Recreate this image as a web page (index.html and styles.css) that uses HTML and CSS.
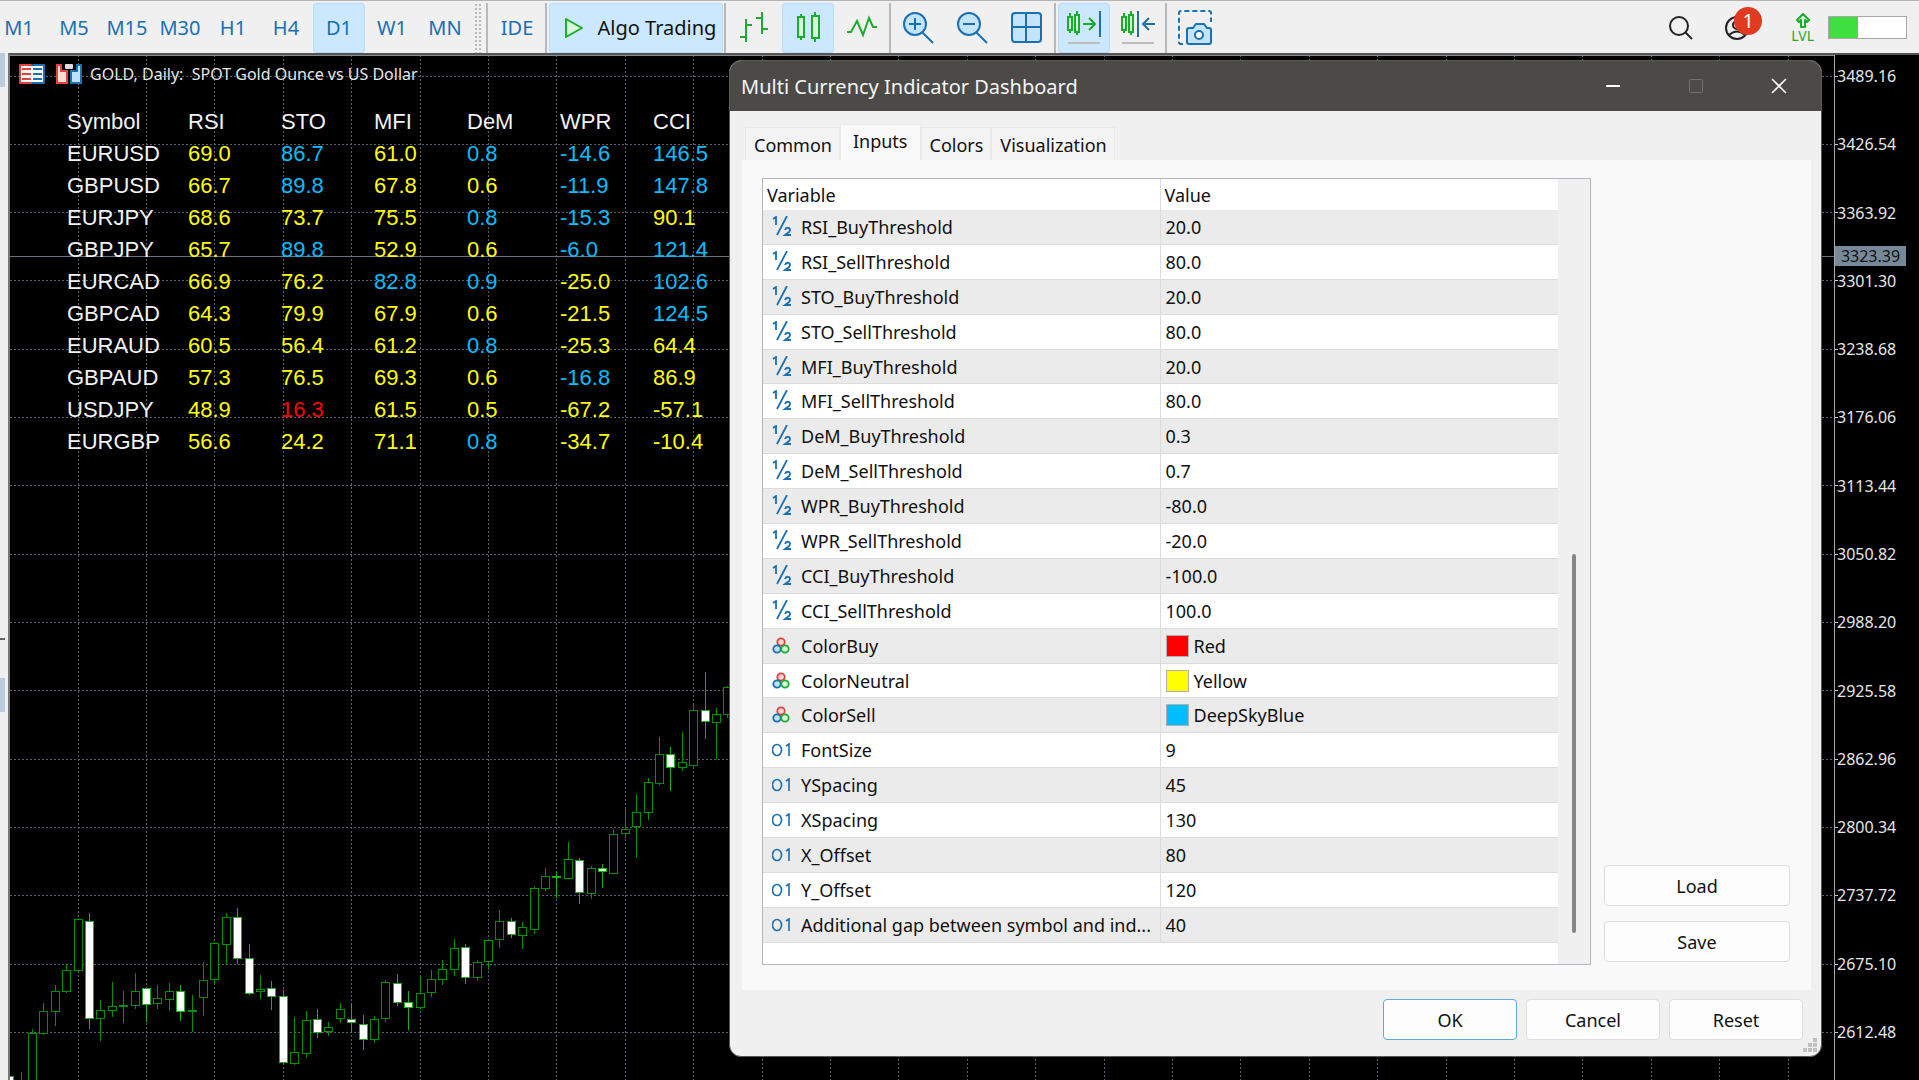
FILE: index.html
```
<!DOCTYPE html>
<html lang="en">
<head>
    <meta charset="utf-8">
    <meta name="viewport" content="width=device-width, initial-scale=1">
    <title>GOLD, Daily</title>
    <link rel="stylesheet" href="styles.css">
</head>
<body>
    <header class="toolbar">
        <button class="frame">M1</button>
        <button class="frame">M5</button>
        <button class="frame">M15</button>
        <button class="frame">M30</button>
        <button class="frame">H1</button>
        <button class="frame">H4</button>
        <button class="frame active">D1</button>
        <button class="frame">W1</button>
        <button class="frame">MN</button>
        <span class="grip"></span>
        <span class="sep"></span>
        <button class="ide">IDE</button>
        <span class="sep"></span>
        <button class="algo active">
            <svg width="20" height="22" viewBox="0 0 20 22"><path d="M2 2L18 11L2 20Z" fill="#d8f8dc" stroke="#1cab2c" stroke-width="2" stroke-linejoin="round"/></svg>
            Algo Trading
        </button>
        <span class="sep"></span>
        <button class="tool" aria-label="Bar chart">
            <svg width="32" height="32" viewBox="0 0 32 32"><path d="M8 7V30M2 25H8M8 13H14M24 0V22M18 6H24M24 17H30" fill="none" stroke="#1cab2c" stroke-width="2"/></svg>
        </button>
        <button class="tool active" aria-label="Candlesticks">
            <svg width="32" height="32" viewBox="0 0 32 32"><path d="M9 2V28M23 0V30" stroke="#1cab2c" stroke-width="2"/><path d="M6 5H12V25H6ZM20 4H27V26H20Z" fill="#d8f8dc" stroke="#1cab2c" stroke-width="2"/></svg>
        </button>
        <button class="tool" aria-label="Line chart">
            <svg width="32" height="32" viewBox="0 0 32 32"><path d="M1 20H5L11 9L17 23L23 6L27 15H31" fill="none" stroke="#1cab2c" stroke-width="2"/></svg>
        </button>
        <span class="sep"></span>
        <button class="tool" aria-label="Zoom in">
            <svg width="32" height="32" viewBox="0 0 32 32"><path d="M19 20L30 31" stroke="#1b6fb3" stroke-width="2"/><circle cx="12" cy="12" r="11" fill="#c3e4fd" stroke="#1b6fb3" stroke-width="2"/><path d="M6 12H18M12 6V18" stroke="#1b6fb3" stroke-width="2"/></svg>
        </button>
        <button class="tool" aria-label="Zoom out">
            <svg width="32" height="32" viewBox="0 0 32 32"><path d="M19 20L30 31" stroke="#1b6fb3" stroke-width="2"/><circle cx="12" cy="12" r="11" fill="#c3e4fd" stroke="#1b6fb3" stroke-width="2"/><path d="M6 12H18" stroke="#1b6fb3" stroke-width="2"/></svg>
        </button>
        <button class="tool" aria-label="Tile windows">
            <svg width="32" height="32" viewBox="0 0 32 32"><rect x="1" y="1" width="29" height="29" rx="3" fill="#c3e4fd" stroke="#1b6fb3" stroke-width="2"/><path d="M1 15H30M15 1V30" stroke="#1b6fb3" stroke-width="2"/></svg>
        </button>
        <span class="sep"></span>
        <button class="tool active" aria-label="Scroll to end">
            <svg width="36" height="34" viewBox="0 0 36 34"><path d="M4 2V22M11 0V24" stroke="#1cab2c" stroke-width="2"/><path d="M2 6H6V19H2ZM9 4H13V21H9Z" fill="#d8f8dc" stroke="#1cab2c" stroke-width="2"/><path d="M17 13H29M23 7L29 13L23 19" fill="none" stroke="#1cab2c" stroke-width="2"/><path d="M34 0V26" stroke="#1b6fb3" stroke-width="2"/><path d="M2 32H34" stroke="#bdbdbd" stroke-width="2"/></svg>
        </button>
        <button class="tool" aria-label="Chart shift">
            <svg width="36" height="34" viewBox="0 0 36 34"><path d="M4 2V22M11 0V24" stroke="#1cab2c" stroke-width="2"/><path d="M2 6H6V19H2ZM9 4H13V21H9Z" fill="#d8f8dc" stroke="#1cab2c" stroke-width="2"/><path d="M35 13H23M29 7L23 13L29 19M18 0V26" fill="none" stroke="#1b6fb3" stroke-width="2"/><path d="M2 32H34" stroke="#bdbdbd" stroke-width="2"/></svg>
        </button>
        <span class="sep"></span>
        <button class="tool" aria-label="Screenshot">
            <svg width="36" height="36" viewBox="0 0 36 36"><path d="M6 34H4Q2 34 2 32V3Q2 1 4 1H32Q34 1 34 3V12" fill="none" stroke="#1b6fb3" stroke-width="2" stroke-dasharray="5 3"/><path d="M12 18H16L19 14H27L30 18H32Q34 18 34 20V32Q34 34 32 34H12Q10 34 10 32V20Q10 18 12 18Z" fill="#c3e4fd" stroke="#1b6fb3" stroke-width="2"/><circle cx="22" cy="25" r="4" fill="#fff" stroke="#1b6fb3" stroke-width="2"/></svg>
        </button>
        <div class="status">
            <button class="plain" aria-label="Search">
                <svg width="24" height="24" viewBox="0 0 24 24"><circle cx="10" cy="10" r="9" fill="none" stroke="#222" stroke-width="2"/><path d="M16 16L23 23" stroke="#222" stroke-width="2"/></svg>
            </button>
            <button class="plain account" aria-label="Account">
                <svg width="24" height="24" viewBox="0 0 24 24"><g fill="none" stroke="#222" stroke-width="2"><circle cx="12" cy="12" r="11"/><circle cx="12" cy="9" r="4"/><path d="M4 19Q12 12 20 19"/></g></svg>
                <span class="badge">1</span>
            </button>
            <div class="level">
                <svg width="14" height="16" viewBox="0 0 14 16"><path d="M7 1L13 7L11 9L9 7V14H5V7L3 9L1 7Z" fill="#d8f8dc" stroke="#1cab2c" stroke-width="2" stroke-linejoin="round"/></svg>
                <span>LVL</span>
            </div>
            <div class="battery"><span class="charge"></span></div>
        </div>
    </header>

    <main class="workspace">
        <aside class="edge">
            <span class="tab-top"></span>
            <span class="mark"></span>
            <span class="tab-low"></span>
        </aside>
        <section class="chart">
            <svg class="plot" id="plot"></svg>
            <div class="overlay">
                <h1 class="chart-title">
                    <svg width="26" height="20" viewBox="0 0 26 20"><rect width="13" height="20" rx="1" fill="#e0433c"/><rect x="13" width="13" height="20" rx="1" fill="#1b6fb3"/><path d="M2 2H24V18H2Z" fill="#fff"/><path d="M3 5H12M3 10H12M3 15H12" stroke="#e0433c" stroke-width="2"/><path d="M14 5H23M14 10H23M14 15H23" stroke="#1b6fb3" stroke-width="2"/></svg>
                    <svg width="26" height="20" viewBox="0 0 26 20"><path d="M1 1H5V7H11V19H1Z" fill="#fcd9d5" stroke="#e0433c" stroke-width="2"/><path d="M25 1H21V7H15V19H25Z" fill="#bfe2fc" stroke="#1b6fb3" stroke-width="2"/><rect x="9" y="0" width="8" height="5" rx="1" fill="#ddd"/></svg>
                    <span>GOLD, Daily:&nbsp; SPOT Gold Ounce vs US Dollar</span>
                </h1>
                <table class="signals">
                    <thead>
                        <tr><th>Symbol</th><th>RSI</th><th>STO</th><th>MFI</th><th>DeM</th><th>WPR</th><th>CCI</th></tr>
                    </thead>
                    <tbody>
                        <tr><th>EURUSD</th><td>69.0</td><td class="sell">86.7</td><td>61.0</td><td class="sell">0.8</td><td class="sell">-14.6</td><td class="sell">146.5</td></tr>
                        <tr><th>GBPUSD</th><td>66.7</td><td class="sell">89.8</td><td>67.8</td><td>0.6</td><td class="sell">-11.9</td><td class="sell">147.8</td></tr>
                        <tr><th>EURJPY</th><td>68.6</td><td>73.7</td><td>75.5</td><td class="sell">0.8</td><td class="sell">-15.3</td><td>90.1</td></tr>
                        <tr><th>GBPJPY</th><td>65.7</td><td class="sell">89.8</td><td>52.9</td><td>0.6</td><td class="sell">-6.0</td><td class="sell">121.4</td></tr>
                        <tr><th>EURCAD</th><td>66.9</td><td>76.2</td><td class="sell">82.8</td><td class="sell">0.9</td><td>-25.0</td><td class="sell">102.6</td></tr>
                        <tr><th>GBPCAD</th><td>64.3</td><td>79.9</td><td>67.9</td><td>0.6</td><td>-21.5</td><td class="sell">124.5</td></tr>
                        <tr><th>EURAUD</th><td>60.5</td><td>56.4</td><td>61.2</td><td class="sell">0.8</td><td>-25.3</td><td>64.4</td></tr>
                        <tr><th>GBPAUD</th><td>57.3</td><td>76.5</td><td>69.3</td><td>0.6</td><td class="sell">-16.8</td><td>86.9</td></tr>
                        <tr><th>USDJPY</th><td>48.9</td><td class="buy">16.3</td><td>61.5</td><td>0.5</td><td>-67.2</td><td>-57.1</td></tr>
                        <tr><th>EURGBP</th><td>56.6</td><td>24.2</td><td>71.1</td><td class="sell">0.8</td><td>-34.7</td><td>-10.4</td></tr>
                    </tbody>
                </table>
            </div>
            <div class="axis">
                <span>3489.16</span><span>3426.54</span><span>3363.92</span><span>3301.30</span><span>3238.68</span>
                <span>3176.06</span><span>3113.44</span><span>3050.82</span><span>2988.20</span><span>2925.58</span>
                <span>2862.96</span><span>2800.34</span><span>2737.72</span><span>2675.10</span><span>2612.48</span>
                <span class="price-tag">3323.39</span>
            </div>
        </section>
    </main>

    <div class="dialog" role="dialog" aria-labelledby="dialog-title">
        <div class="titlebar">
            <h2 id="dialog-title">Multi Currency Indicator Dashboard</h2>
            <button class="win" aria-label="Minimize"><svg width="16" height="16" viewBox="0 0 16 16"><path d="M1 8H15" stroke="#fff" stroke-width="2"/></svg></button>
            <button class="win" aria-label="Maximize" disabled><svg width="16" height="16" viewBox="0 0 16 16"><rect x="1.5" y="1.5" width="13" height="13" rx="1" fill="none" stroke="#72716f"/></svg></button>
            <button class="win" aria-label="Close"><svg width="16" height="16" viewBox="0 0 16 16"><path d="M1 1L15 15M15 1L1 15" stroke="#fff" stroke-width="1.6"/></svg></button>
        </div>
        <div class="tabs" role="tablist">
            <button class="tab" role="tab">Common</button>
            <button class="tab current" role="tab" aria-selected="true">Inputs</button>
            <button class="tab" role="tab">Colors</button>
            <button class="tab" role="tab">Visualization</button>
        </div>
        <div class="pane">
            <div class="listbox">
                <table class="inputs">
                    <thead>
                        <tr><th>Variable</th><th>Value</th></tr>
                    </thead>
                    <tbody id="inputs"></tbody>
                </table>
                <div class="track"><span class="thumb"></span></div>
            </div>
            <div class="side">
                <button class="btn">Load</button>
                <button class="btn">Save</button>
            </div>
        </div>
        <div class="footer">
            <button class="btn default">OK</button>
            <button class="btn">Cancel</button>
            <button class="btn">Reset</button>
        </div>
        <svg class="resize" width="15" height="15" viewBox="0 0 15 15"><path d="M10 0H14V4H10ZM5 5H9V9H5ZM10 5H14V9H10ZM0 10H4V14H0ZM5 10H9V14H5ZM10 10H14V14H10Z" fill="#c0c0c0"/></svg>
    </div>

    <script src="chart.js"></script>
</body>
</html>
```
FILE: styles.css
```
* {
    box-sizing: border-box;
    margin: 0;
}
body {
    height: 100vh;
    display: flex;
    flex-direction: column;
    overflow: hidden;
    background: #f0f0f0;
    font-family: "Noto Sans", "Open Sans", sans-serif;
    color: #111;
}
button {
    font: inherit;
    color: inherit;
    background: none;
    border: none;
    padding: 0;
}
svg {
    display: block;
    flex: none;
}

/* toolbar */
.toolbar {
    height: 53px;
    flex: none;
    display: flex;
    align-items: center;
    padding: 2px 12px 1px 0;
    border-top: 1px solid #b4b4b4;
    background: #f0f0f0;
    font-size: 20px;
}
.toolbar > button {
    height: 50px;
    display: flex;
    align-items: center;
    justify-content: center;
    border-radius: 3px;
}
.frame {
    width: 52px;
    margin-right: 1px;
    color: #1b6fb3;
}
.frame:first-child {
    width: 38px;
    margin-right: 10px;
}
.toolbar > .active {
    background: #cce8ff;
    border: 1px solid #b5dcfb;
}
.grip {
    width: 8px;
    height: 50px;
    margin: 0 4px 0 2px;
    background-image: radial-gradient(#bbb 1px, transparent 1px);
    background-size: 4px 4px;
}
.sep {
    width: 2px;
    height: 50px;
    margin-right: 1px;
    background: #b8b8b8;
}
.ide {
    width: 56px;
    color: #1b6fb3;
}
.algo {
    width: 174px;
    margin: 0 1px;
    padding-left: 8px;
    gap: 14px;
}
.tool {
    width: 52px;
    margin: 0 1px;
}
.status {
    margin-left: auto;
    display: flex;
    align-items: center;
    gap: 32px;
}
.plain {
    position: relative;
}
.badge {
    position: absolute;
    left: 9px;
    top: -9px;
    width: 28px;
    height: 28px;
    border-radius: 50%;
    background: #e03a20;
    color: #fff;
    line-height: 28px;
}
.level {
    display: flex;
    flex-direction: column;
    align-items: center;
    margin-left: 10px;
    color: #1cab2c;
    font-size: 14px;
    line-height: 14px;
}
.battery {
    width: 79px;
    height: 23px;
    margin-left: -18px;
    border: 1px solid #a8a8a8;
    background: #fff;
}
.charge {
    display: block;
    width: 38%;
    height: 100%;
    background: #40df40;
}

/* chart */
.workspace {
    flex: 1;
    min-height: 0;
    display: flex;
}
.edge {
    position: relative;
    width: 8px;
    background: #f0f0f0;
}
.tab-top, .tab-low, .mark {
    position: absolute;
    left: 0;
    width: 5px;
    height: 34px;
    background: #bccbdb;
}
.tab-top {
    top: 0;
}
.tab-low {
    top: 625px;
}
.mark {
    top: 585px;
    height: 2px;
    background: #666;
}
.chart {
    flex: 1;
    min-width: 0;
    display: grid;
    grid-template-columns: 1fr 84px;
    border-top: 2px solid #555;
    border-left: 2px solid #777;
    background: #000;
    color: #e6e6e6;
}
.plot {
    grid-area: 1 / 1 / 2 / 3;
    width: 100%;
    height: 100%;
}
.overlay {
    grid-area: 1 / 1;
    padding: 8px 0 0 9px;
}
.chart-title {
    display: flex;
    align-items: center;
    gap: 11px;
    height: 22px;
    font-size: 16px;
    font-weight: normal;
}
.chart-title span {
    margin-left: -3px;
}
.signals {
    margin: 21px 0 0 48px;
    border-collapse: collapse;
    table-layout: fixed;
    width: 679px;
    font: 22px "Liberation Sans", Arial, sans-serif;
}
.signals th, .signals td {
    width: 93px;
    height: 32px;
    padding: 0;
    line-height: 32px;
    text-align: left;
    font-weight: normal;
    color: #ffff00;
}
.signals th {
    color: #f2f2f2;
}
.signals th:first-child {
    width: 121px;
}
.signals .sell {
    color: #00bfff;
}
.signals .buy {
    color: #ff0000;
}
.axis {
    grid-area: 1 / 2;
    position: relative;
    display: flex;
    flex-direction: column;
    justify-content: space-between;
    padding: 10px 0 37px 2px;
    font-size: 16px;
    line-height: 22px;
}
.price-tag {
    position: absolute;
    left: 0;
    top: 191px;
    width: 71px;
    line-height: 20px;
    text-align: center;
    background: #778899;
    color: #111;
}

/* dialog */
.dialog {
    position: absolute;
    left: 729px;
    top: 60px;
    width: 1093px;
    display: flex;
    flex-direction: column;
    border: 1px solid #5a5957;
    border-radius: 12px;
    overflow: hidden;
    background: #f0f0f0;
    font-size: 18px;
}
.titlebar {
    height: 50px;
    display: flex;
    align-items: center;
    gap: 67px;
    padding: 0 34px 0 11px;
    background: #4b4a47;
    color: #f4f4f4;
}
.titlebar h2 {
    flex: 1;
    font-size: 20px;
    font-weight: normal;
}
.tabs {
    display: flex;
    align-items: flex-end;
    padding: 13px 15px 0;
}
.tab {
    height: 33px;
    padding: 2px 7px 0 8px;
    border: 1px solid #e9e9e9;
    border-bottom: none;
    background: #f3f3f3;
}
.tab.current {
    height: 36px;
    padding: 0 12px 4px;
    background: #f9f9f9;
}
.pane {
    display: flex;
    gap: 13px;
    margin: 0 10px 0 12px;
    padding: 18px 21px 25px 20px;
    background: #f9f9f9;
}
.listbox {
    flex: 1;
    display: flex;
    padding-bottom: 21px;
    border: 1px solid #b4b6be;
    background: #fff;
}
.inputs {
    flex: 1;
    width: 100%;
    height: 764px;
    table-layout: fixed;
    border-collapse: separate;
    border-spacing: 0;
}
.inputs th, .inputs td {
    width: 50%;
    padding: 0 4px;
    text-align: left;
    font-weight: normal;
    white-space: nowrap;
}
.inputs th {
    height: 31px;
}
.inputs tbody tr:nth-child(odd) {
    background: #ebebeb;
}
.inputs td {
    border-bottom: 1px solid #dcdcdc;
}
.inputs th:first-child, .inputs td:first-child {
    border-right: 1px solid #dcdcdc;
}
.cell {
    display: flex;
    align-items: center;
    gap: 9px;
    padding-left: 5px;
    line-height: 24px;
}
.icon {
    flex: none;
    width: 20px;
}
.value {
    display: flex;
    align-items: center;
    gap: 5px;
    padding-left: 1px;
    line-height: 24px;
}
.swatch {
    width: 23px;
    height: 22px;
    border: 1px solid #b0b0b0;
}
.track {
    position: relative;
    flex: none;
    width: 32px;
    margin-bottom: -21px;
    background: #f0f0f0;
}
.thumb {
    position: absolute;
    left: 14px;
    top: 375px;
    bottom: 31px;
    width: 4px;
    border-radius: 2px;
    background: #868686;
}
.side {
    width: 186px;
    display: flex;
    flex-direction: column;
    justify-content: flex-end;
    gap: 15px;
    padding-bottom: 3px;
}
.btn {
    height: 41px;
    border: 1px solid #dedede;
    border-radius: 4px;
    background: #fdfdfd;
}
.footer {
    display: flex;
    justify-content: flex-end;
    gap: 9px;
    padding: 9px 18px 16px;
}
.footer .btn {
    width: 134px;
}
.btn.default {
    border-color: #5ea9e0;
}
.resize {
    position: absolute;
    right: 3px;
    bottom: 3px;
}
```
FILE: chart.js
```
const NS = 'http://www.w3.org/2000/svg'
const plot = document.getElementById('plot')

// the plot starts below the toolbar and right of the edge strip
const LEFT = 10
const TOP = 55
const AXIS = 1834

function draw(name, attrs) {
    const el = document.createElementNS(NS, name)
    for (const key in attrs) el.setAttribute(key, attrs[key])
    plot.appendChild(el)
}

function line(x1, y1, x2, y2, stroke, dash) {
    draw('line', {
        x1: x1 - LEFT, y1: y1 - TOP, x2: x2 - LEFT, y2: y2 - TOP,
        stroke: stroke, 'stroke-width': 1, 'stroke-dasharray': dash || 'none'
    })
}

// grid
for (let i = 0; i < 26; i++) {
    const x = Math.round(77.5 + i * 68.4) + 0.5
    line(x, 55, x, 1080, '#55616d', '2 2')
}
for (let i = 0; i < 15; i++) {
    const y = Math.round(75.5 + i * 68.33) + 0.5
    line(10, y, AXIS, y, '#55616d', '2 2')
    line(AXIS, y, AXIS + 4, y, '#c8c8c8')
}
line(10, 55.5, AXIS, 55.5, '#8a8a8a')
line(AXIS + 0.5, 55, AXIS + 0.5, 1080, '#a8a8a8')

// high, body top, body bottom, low, 1 = falling
const candles = [
    [1076, 1076, 1095, 1095, 1], [1072, 1086, 1095, 1095, 0], [1029, 1033, 1095, 1095, 0],
    [1003, 1011, 1033, 1035, 0], [985, 991, 1011, 1026, 0], [965, 970, 991, 993, 0],
    [918, 919, 970, 972, 0], [913, 921, 1018, 1029, 1], [1000, 1010, 1018, 1041, 0],
    [982, 1006, 1010, 1017, 0], [991, 1005, 1006, 1023, 0], [973, 991, 1005, 1009, 0],
    [988, 988, 1004, 1022, 1], [985, 998, 1003, 1009, 0], [983, 991, 999, 1011, 0],
    [985, 991, 1011, 1021, 1], [995, 1010, 1011, 1032, 0], [962, 980, 997, 1016, 0],
    [942, 943, 979, 983, 0], [913, 917, 944, 964, 0], [908, 917, 958, 964, 1],
    [944, 958, 993, 995, 1], [975, 989, 991, 999, 0], [981, 988, 996, 1010, 1],
    [990, 996, 1062, 1064, 1], [1017, 1052, 1063, 1065, 0], [1011, 1020, 1053, 1058, 0],
    [1009, 1019, 1032, 1038, 1], [1022, 1027, 1031, 1036, 0], [1003, 1009, 1018, 1023, 0],
    [1003, 1019, 1022, 1033, 1], [1015, 1024, 1039, 1050, 1], [1016, 1019, 1039, 1043, 0],
    [980, 982, 1018, 1022, 0], [974, 983, 1002, 1006, 1], [991, 1002, 1007, 1030, 1],
    [975, 993, 1007, 1010, 0], [970, 979, 992, 997, 0], [960, 969, 979, 985, 0],
    [939, 948, 969, 976, 0], [944, 947, 977, 984, 1], [960, 962, 977, 981, 0],
    [939, 940, 961, 970, 0], [910, 921, 939, 948, 0], [918, 921, 934, 938, 1],
    [922, 927, 935, 949, 0], [886, 888, 929, 934, 0], [868, 876, 888, 891, 0],
    [872, 876, 877, 898, 1], [842, 859, 878, 879, 0], [858, 860, 892, 904, 1],
    [866, 868, 893, 899, 0], [864, 868, 871, 888, 1], [829, 834, 873, 874, 0],
    [808, 829, 833, 838, 0], [794, 812, 826, 858, 0], [778, 782, 812, 820, 0],
    [737, 754, 783, 785, 0], [747, 754, 767, 791, 1], [732, 762, 767, 771, 0],
    [705, 710, 765, 768, 0], [672, 710, 721, 739, 1], [708, 714, 722, 759, 0],
    [686, 687, 714, 718, 0]
]
candles.forEach(([high, top, bottom, low, falling], i) => {
    const x = Math.round(9.1 + i * 11.4) + 0.5
    const green = falling ? '#18b018' : '#009000'
    line(x, high, x, low, green)
    draw('rect', {
        x: x - 4 - LEFT, y: top + 0.5 - TOP, width: 8, height: bottom - top,
        fill: falling ? '#fff' : '#000', stroke: green
    })
})

// current price
line(10, 256.5, AXIS, 256.5, '#66737f')

// input rows
const icons = {
    real: '<svg class="icon" width="20" height="22" viewBox="0 0 20 22"><path d="M1 3L4 1V9M15 0L5 19M13 14Q14 11 17 12Q19 14 17 16L13 19H19" fill="none" stroke="#1b6fb3" stroke-width="1.8"/></svg>',
    int: '<svg class="icon" width="20" height="14" viewBox="0 0 20 14"><ellipse cx="5" cy="7" rx="4.5" ry="5.5" fill="none" stroke="#1b6fb3" stroke-width="1.6"/><path d="M14 3L17 1V13" fill="none" stroke="#1b6fb3" stroke-width="1.6"/></svg>',
    color: '<svg class="icon" width="20" height="18" viewBox="0 0 20 18"><g stroke-width="1.8"><circle cx="9" cy="5" r="3.7" fill="#fcd9d5" stroke="#e0433c"/><circle cx="5" cy="12" r="3.7" fill="#bfe2fc" stroke="#1b6fb3"/><circle cx="13" cy="12" r="3.7" fill="#d8f8dc" stroke="#1cab2c"/></g></svg>'
}
const inputs = [
    ['real', 'RSI_BuyThreshold', '20.0'], ['real', 'RSI_SellThreshold', '80.0'],
    ['real', 'STO_BuyThreshold', '20.0'], ['real', 'STO_SellThreshold', '80.0'],
    ['real', 'MFI_BuyThreshold', '20.0'], ['real', 'MFI_SellThreshold', '80.0'],
    ['real', 'DeM_BuyThreshold', '0.3'], ['real', 'DeM_SellThreshold', '0.7'],
    ['real', 'WPR_BuyThreshold', '-80.0'], ['real', 'WPR_SellThreshold', '-20.0'],
    ['real', 'CCI_BuyThreshold', '-100.0'], ['real', 'CCI_SellThreshold', '100.0'],
    ['color', 'ColorBuy', 'Red'], ['color', 'ColorNeutral', 'Yellow'], ['color', 'ColorSell', 'DeepSkyBlue'],
    ['int', 'FontSize', '9'], ['int', 'YSpacing', '45'], ['int', 'XSpacing', '130'],
    ['int', 'X_Offset', '80'], ['int', 'Y_Offset', '120'],
    ['int', 'Additional gap between symbol and ind...', '40']
]
document.getElementById('inputs').innerHTML = inputs.map(([type, name, value]) => {
    const swatch = type === 'color' ? `<span class="swatch" style="background:${value}"></span>` : ''
    return `<tr><td><div class="cell">${icons[type]}<span class="label">${name}</span></div></td>` +
        `<td><div class="value">${swatch}${value}</div></td></tr>`
}).join('')
```
